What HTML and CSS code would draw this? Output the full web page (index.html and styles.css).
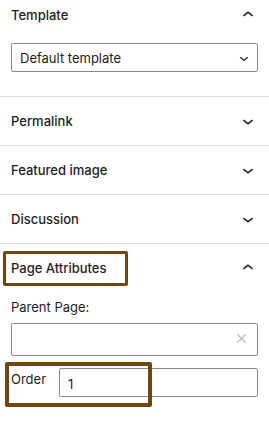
FILE: index.html
```html
<!DOCTYPE html>
<html lang="en">
<head>
    <meta charset="UTF-8">
    <meta name="viewport" content="width=device-width, initial-scale=1.0">
    <title>Page Settings</title>
    <link rel="stylesheet" href="styles.css">
</head>
<body>
    <div class="sidebar">
        <div class="panel is-open">
            <div class="panel-header">
                <span class="panel-title">Template</span>
                <svg class="chevron" viewBox="0 0 24 24"><path d="M6.5 12.4L12 8l5.5 4.4-.9 1.2L12 10l-4.5 3.6-1-1.2z"/></svg>
            </div>
            <div class="panel-body">
                <div class="select">
                    <span>Default template</span>
                    <svg class="select-arrow" viewBox="0 0 24 24"><path d="M17.5 11.6L12 16l-5.5-4.4.9-1.2L12 14l4.5-3.6 1 1.2z"/></svg>
                </div>
            </div>
        </div>

        <div class="panel">
            <div class="panel-header">
                <span class="panel-title">Permalink</span>
                <svg class="chevron" viewBox="0 0 24 24"><path d="M17.5 11.6L12 16l-5.5-4.4.9-1.2L12 14l4.5-3.6 1 1.2z"/></svg>
            </div>
        </div>

        <div class="panel">
            <div class="panel-header">
                <span class="panel-title">Featured image</span>
                <svg class="chevron" viewBox="0 0 24 24"><path d="M17.5 11.6L12 16l-5.5-4.4.9-1.2L12 14l4.5-3.6 1 1.2z"/></svg>
            </div>
        </div>

        <div class="panel">
            <div class="panel-header">
                <span class="panel-title">Discussion</span>
                <svg class="chevron" viewBox="0 0 24 24"><path d="M17.5 11.6L12 16l-5.5-4.4.9-1.2L12 14l4.5-3.6 1 1.2z"/></svg>
            </div>
        </div>

        <div class="panel is-open no-border">
            <div class="panel-header">
                <span class="panel-title marked">Page Attributes</span>
                <svg class="chevron" viewBox="0 0 24 24"><path d="M6.5 12.4L12 8l5.5 4.4-.9 1.2L12 10l-4.5 3.6-1-1.2z"/></svg>
            </div>
            <div class="panel-body attrs">
                <label class="field-label">Parent Page:</label>
                <div class="combo">
                    <svg class="clear" viewBox="0 0 12 12"><path d="M1.5 1.5l9 9M10.5 1.5l-9 9"/></svg>
                </div>
                <div class="order-row">
                    <span class="order-label">Order</span>
                    <div class="order-input">1</div>
                </div>
            </div>
        </div>
    </div>
</body>
</html>
```

FILE: styles.css
```css
*, *::before, *::after {
    margin: 0;
    padding: 0;
    box-sizing: border-box;
}

body {
    background: #fff;
    color: #1e1e1e;
    font-family: Inter, "Noto Sans", sans-serif;
    font-size: 13px;
    line-height: 16px;
}

.sidebar {
    margin-top: -9px;
}

.panel {
    border-bottom: 1px solid #e0e0e0;
}

.panel.no-border {
    border-bottom: none;
}

.panel-header {
    height: 48px;
    display: flex;
    align-items: center;
    justify-content: space-between;
    padding: 0 10px 0 11px;
}

.panel-title {
    font-weight: 500;
}

.chevron {
    width: 22px;
    height: 22px;
    fill: #1e1e1e;
}

.panel-body {
    padding: 4px 11px 24px;
}

.select {
    height: 29px;
    border: 1px solid #8a8a8a;
    border-radius: 2px;
    display: flex;
    align-items: center;
    justify-content: space-between;
    padding: 0 4px 0 8px;
}

.select-arrow {
    width: 18px;
    height: 18px;
    fill: #1e1e1e;
}

/* page attributes */
.attrs {
    padding-top: 7px;
}

.field-label {
    display: block;
    margin-bottom: 8px;
}

.combo {
    height: 33px;
    border: 1px solid #8a8a8a;
    border-radius: 2px;
    display: flex;
    align-items: center;
    justify-content: flex-end;
    padding-right: 10px;
}

.clear {
    width: 11px;
    height: 11px;
    stroke: #b5b5b5;
    stroke-width: 1.3;
    margin-top: -2px;
}

.order-row {
    position: relative;
    display: flex;
    align-items: flex-start;
    margin-top: 12px;
}

.order-label {
    width: 48px;
    padding-top: 3px;
}

.order-input {
    flex: 1;
    height: 29px;
    border: 1px solid #8a8a8a;
    border-radius: 2px;
    padding: 0 8px;
    display: flex;
    align-items: center;
    padding-top: 2px;
}

/* annotation boxes */
.marked {
    position: relative;
}

.marked::after {
    content: "";
    position: absolute;
    left: -8px;
    right: -21px;
    top: -9px;
    bottom: -10px;
    border: 3px solid #71450f;
    border-radius: 2px;
}

.order-row::after {
    content: "";
    position: absolute;
    left: -6px;
    top: -6px;
    width: 147px;
    height: 45px;
    border: 4px solid #71450f;
    border-radius: 2px;
}
```
